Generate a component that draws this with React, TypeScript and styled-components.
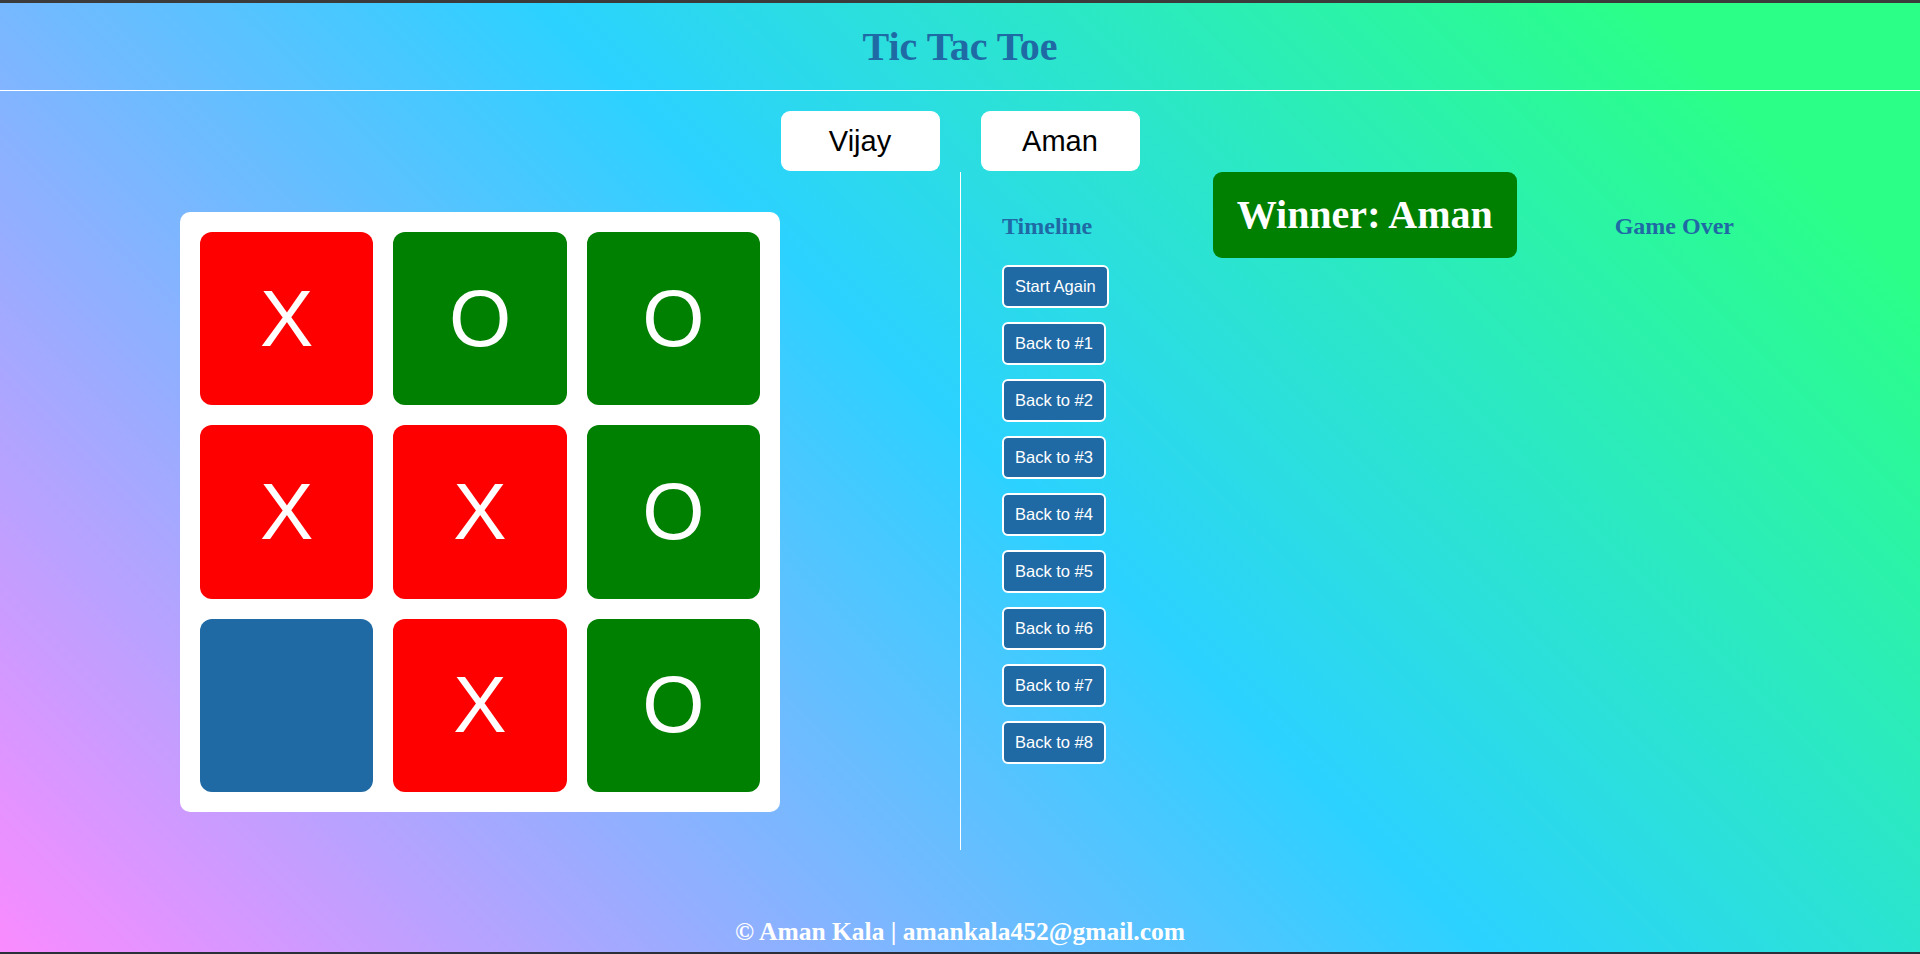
import styled, { createGlobalStyle } from "styled-components";

const GlobalStyle = createGlobalStyle`
  * { box-sizing: border-box; }
  html, body { margin: 0; padding: 0; }
  body { font-family: "Liberation Sans", Arial, sans-serif; }
`

const BLUE = '#1f6aa5'

const Page = styled.div`
  height: 100vh;
  display: flex;
  flex-direction: column;
  border-top: 3px solid #3b3b3b;
  border-bottom: 2px solid #2b2f3a;
  background-color: #fa8bff;
  background-image: linear-gradient(45deg, #fa8bff 0%, #2bd2ff 52%, #2bff88 90%);
  overflow: hidden;
`

const Header = styled.header`
  height: 88px;
  flex-shrink: 0;
  display: flex;
  align-items: center;
  justify-content: center;
  border-bottom: 1px solid #ffffff;
`

const Title = styled.h1`
  margin: 0;
  font-family: "Liberation Serif", "Times New Roman", serif;
  font-weight: 700;
  font-size: 40px;
  color: ${BLUE};
`

const Players = styled.div`
  margin-top: 20px;
  display: flex;
  justify-content: center;
  gap: 41px;
`

const PlayerName = styled.div`
  width: 159px;
  height: 60px;
  border-radius: 9px;
  background: #ffffff;
  display: flex;
  align-items: center;
  justify-content: center;
  font-family: "Liberation Sans", Arial, sans-serif;
  font-size: 29px;
  color: #000000;
`

const Main = styled.main`
  margin-top: 1px;
  height: 678px;
  flex-shrink: 0;
  display: grid;
  grid-template-columns: 960px 1fr;
`

const BoardSide = styled.section`
  display: flex;
  align-items: center;
  justify-content: center;
  padding-top: 2px;
`

const Board = styled.div`
  width: 600px;
  height: 600px;
  padding: 20px;
  border-radius: 10px;
  background: #ffffff;
  display: grid;
  grid-template-columns: repeat(3, 1fr);
  grid-template-rows: repeat(3, 1fr);
  gap: 20px;
`

const Cell = styled.button<{ mark: 'X' | 'O' | '' }>`
  border: none;
  padding: 0;
  border-radius: 12px;
  background: ${p => p.mark === 'X' ? '#ff0000' : p.mark === 'O' ? '#008000' : BLUE};
  color: #ffffff;
  font-family: "Liberation Sans", Arial, sans-serif;
  font-size: 80px;
  display: flex;
  align-items: center;
  justify-content: center;
`

const InfoSide = styled.section`
  border-left: 1px solid #ffffff;
  padding-left: 41px;
  display: flex;
  align-items: flex-start;
`

const Timeline = styled.div`
  padding-top: 41px;
  display: flex;
  flex-direction: column;
  align-items: flex-start;
  gap: 14px;
`

const Heading = styled.h3`
  margin: 0;
  font-family: "Liberation Serif", "Times New Roman", serif;
  font-weight: 700;
  font-size: 24px;
  color: ${BLUE};
`

const TimelineHeading = styled(Heading)`
  margin-bottom: 11px;
`

const StatusHeading = styled(Heading)`
  margin-top: 41px;
  margin-left: 98px;
`

const StepButton = styled.button`
  padding: 10px 11px;
  border: 2px solid #ffffff;
  border-radius: 6px;
  background: ${BLUE};
  color: #ffffff;
  font-family: "Liberation Sans", Arial, sans-serif;
  font-size: 16.5px;
  line-height: 19px;
  cursor: pointer;
`

const Winner = styled.div`
  margin-left: 104px;
  padding: 20px 24px;
  border-radius: 9px;
  background: #008000;
  color: #ffffff;
  font-family: "Liberation Serif", "Times New Roman", serif;
  font-weight: 700;
  font-size: 40px;
  line-height: 46px;
  white-space: nowrap;
`

const Footer = styled.footer`
  margin-top: 67px;
  text-align: center;
  font-family: "Liberation Serif", "Times New Roman", serif;
  font-weight: 700;
  font-size: 25.5px;
  color: #ffffff;
`

const squares: ('X' | 'O' | '')[] = ['X', 'O', 'O', 'X', 'X', 'O', '', 'X', 'O']

function App() {
  return (
    <>
      <GlobalStyle/>
      <Page>
        <Header>
          <Title>Tic Tac Toe</Title>
        </Header>

        <Players>
          <PlayerName>Vijay</PlayerName>
          <PlayerName>Aman</PlayerName>
        </Players>

        <Main>
          <BoardSide>
            <Board>
              {squares.map((mark, i) => (
                <Cell key={i} mark={mark}>{mark}</Cell>
              ))}
            </Board>
          </BoardSide>

          <InfoSide>
            <Timeline>
              <TimelineHeading>Timeline</TimelineHeading>
              <StepButton>Start Again</StepButton>
              {[1, 2, 3, 4, 5, 6, 7, 8].map(n => (
                <StepButton key={n}>Back to #{n}</StepButton>
              ))}
            </Timeline>
            <Winner>Winner: Aman</Winner>
            <StatusHeading>Game Over</StatusHeading>
          </InfoSide>
        </Main>

        <Footer>© Aman Kala | amankala452@gmail.com</Footer>
      </Page>
    </>
  );
}

export default App;
